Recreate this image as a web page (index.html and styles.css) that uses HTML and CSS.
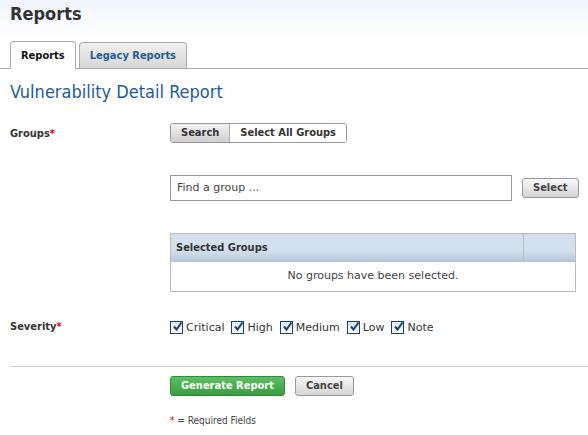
FILE: index.html
```html
<!DOCTYPE html>
<html>
<head>
<meta charset="utf-8">
<link rel="stylesheet" href="styles.css">
</head>
<body>
<div class="page">
  <h1 class="title">Reports</h1>
  <div class="tabs">
    <div class="tab active">Reports</div>
    <div class="tab">Legacy Reports</div>
  </div>
  <h2 class="subtitle">Vulnerability Detail Report</h2>

  <div class="row groups-row">
    <div class="label">Groups<span class="req">*</span></div>
    <div class="field">
      <div class="seg">
        <span class="seg-btn on">Search</span><span class="seg-btn">Select All Groups</span>
      </div>
      <div class="find">
        <div class="input">Find a group ...</div>
        <span class="btn gray">Select</span>
      </div>
      <div class="table">
        <div class="thead"><span class="th-main">Selected Groups</span><span class="th-side"></span></div>
        <div class="tbody">No groups have been selected.</div>
      </div>
    </div>
  </div>

  <div class="row sev-row">
    <div class="label">Severity<span class="req">*</span></div>
    <div class="field checks">
      <label class="chk"><span class="box"><svg viewBox="0 0 13 13" width="13" height="13"><path d="M3 6.5 L5.5 9.5 L10.5 2.5" fill="none" stroke="#1e3f73" stroke-width="2"/></svg></span>Critical</label>
      <label class="chk"><span class="box"><svg viewBox="0 0 13 13" width="13" height="13"><path d="M3 6.5 L5.5 9.5 L10.5 2.5" fill="none" stroke="#1e3f73" stroke-width="2"/></svg></span>High</label>
      <label class="chk"><span class="box"><svg viewBox="0 0 13 13" width="13" height="13"><path d="M3 6.5 L5.5 9.5 L10.5 2.5" fill="none" stroke="#1e3f73" stroke-width="2"/></svg></span>Medium</label>
      <label class="chk"><span class="box"><svg viewBox="0 0 13 13" width="13" height="13"><path d="M3 6.5 L5.5 9.5 L10.5 2.5" fill="none" stroke="#1e3f73" stroke-width="2"/></svg></span>Low</label>
      <label class="chk"><span class="box"><svg viewBox="0 0 13 13" width="13" height="13"><path d="M3 6.5 L5.5 9.5 L10.5 2.5" fill="none" stroke="#1e3f73" stroke-width="2"/></svg></span>Note</label>
    </div>
  </div>

  <div class="divider"></div>

  <div class="actions">
    <span class="btn green">Generate Report</span>
    <span class="btn gray">Cancel</span>
  </div>
  <div class="note"><span class="req">*</span> = Required Fields</div>
</div>
</body>
</html>
```

FILE: styles.css
```css
html, body {
  margin: 0;
  padding: 0;
}
body {
  font-family: "DejaVu Sans", Verdana, sans-serif;
  font-size: 11px;
  color: #333;
  background: linear-gradient(#f0f5fd 0px, #ffffff 40px) no-repeat;
  background-color: #fff;
  width: 588px;
  height: 435px;
  overflow: hidden;
}
.page {
  padding: 0 0 0 10px;
}
.title,
.tab,
.label,
.seg-btn,
.btn,
.th-main {
  font-family: "DejaVu Sans Condensed", "DejaVu Sans", sans-serif;
}
.title {
  margin: 0;
  padding-top: 2px;
  height: 39px;
  font-size: 18px;
  line-height: 24px;
  font-weight: bold;
  color: #333;
}
.tabs {
  display: flex;
  gap: 3px;
  margin-left: -10px;
  padding-left: 10px;
  border-bottom: 1px solid #aaa;
  height: 27px;
  align-items: flex-end;
}
.tab {
  height: 26px;
  box-sizing: border-box;
  border: 1px solid #aaa;
  border-bottom: none;
  border-radius: 4px 4px 0 0;
  padding: 0 10px;
  line-height: 26px;
  font-weight: bold;
  font-size: 11px;
  color: #1f5d96;
  background: linear-gradient(#f0f0f0, #d6d6d6);
}
.tab.active {
  background: #fff;
  color: #111;
  height: 28px;
  margin-bottom: -1px;
  line-height: 27px;
}
.subtitle {
  margin: 12px 0 0 0;
  font-family: "DejaVu Sans Condensed", "DejaVu Sans", sans-serif;
  font-size: 18px;
  line-height: 22px;
  font-weight: normal;
  color: #1b5b97;
}
.row {
  display: flex;
}
.label {
  width: 160px;
  font-weight: bold;
  line-height: 14px;
}
.req {
  color: #d00;
}
.groups-row {
  margin-top: 20px;
}
.groups-row .label {
  padding-top: 4px;
}
.field {
  flex: none;
}
.seg {
  display: inline-flex;
  border: 1px solid #999;
  border-radius: 3px;
  overflow: hidden;
  height: 18px;
}
.seg-btn {
  font-weight: bold;
  line-height: 18px;
  padding: 0 10px;
  background: #fff;
  color: #333;
}
.seg-btn.on {
  background: linear-gradient(#f2f2f2, #cfcfcf);
  border-right: 1px solid #aaa;
}
.find {
  display: flex;
  align-items: center;
  margin-top: 32px;
  gap: 10px;
}
.input {
  width: 334px;
  height: 24px;
  border: 1px solid #999;
  line-height: 24px;
  padding-left: 6px;
  color: #444;
}
.btn {
  display: inline-block;
  font-weight: bold;
  border-radius: 3px;
  height: 18px;
  line-height: 18px;
  padding: 0 10px;
}
.btn.gray {
  border: 1px solid #999;
  background: linear-gradient(#f8f8f8, #d4d4d4);
  color: #444;
}
.btn.green {
  border: 1px solid #2f8a3a;
  background: linear-gradient(#5cbf61, #3a9c42);
  color: #fff;
}
.table {
  margin-top: 32px;
  width: 406px;
  border: 1px solid #bbb;
  box-sizing: border-box;
}
.thead {
  display: flex;
  height: 27px;
  background: linear-gradient(#d3e0ee 0%, #d3e0ee 60%, #b9c9da 100%);
  border-bottom: 1px solid #b5c2cf;
}
.th-main {
  flex: 1;
  font-weight: bold;
  line-height: 27px;
  padding-left: 5px;
  border-right: 1px solid #bbb;
}
.th-side {
  width: 51px;
}
.tbody {
  height: 29px;
  line-height: 27px;
  text-align: center;
  color: #444;
}
.sev-row {
  margin-top: 28px;
  align-items: center;
}
.checks {
  display: flex;
  gap: 7px;
}
.chk {
  display: inline-flex;
  align-items: center;
  gap: 3px;
  color: #333;
}
.box {
  width: 11px;
  height: 11px;
  border: 1px solid #1e3f73;
  background: linear-gradient(#dce8f5, #fff);
  display: inline-block;
  position: relative;
}
.box svg {
  position: absolute;
  left: 0;
  top: -2px;
}
.divider {
  margin-top: 32px;
  border-top: 1px solid #ccc;
}
.actions {
  margin-top: 9px;
  margin-left: 160px;
  display: flex;
  gap: 10px;
}
.note {
  margin-top: 19px;
  margin-left: 160px;
  font-family: "DejaVu Sans Condensed", "DejaVu Sans", sans-serif;
  font-size: 10px;
  color: #444;
}
```
